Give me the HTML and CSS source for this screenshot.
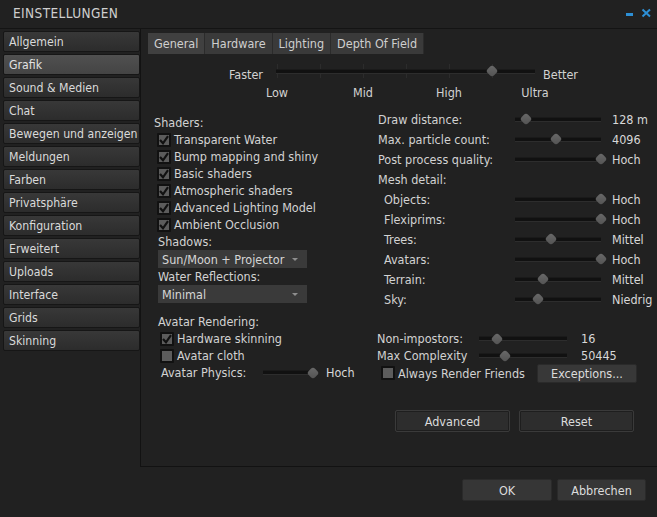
FILE: index.html
```html
<!DOCTYPE html>
<html lang="de">
<head>
  <meta charset="UTF-8">
  <title>Einstellungen</title>
  <link rel="stylesheet" href="styles.css">
</head>
<body>
  <div class="window">
    <header class="titlebar">
      <span class="title">EINSTELLUNGEN</span>
      <svg class="controls" width="30" height="12" viewBox="0 0 30 12">
        <rect x="3" y="6" width="7" height="3" fill="#2d8fd5"/>
        <path d="M19.5 2.5 L27 9.5 M27 2.5 L19.5 9.5" stroke="#2d8fd5" stroke-width="2"/>
      </svg>
    </header>

    <div class="main">
      <nav class="sidebar">
        <div class="nav-item">Allgemein</div>
        <div class="nav-item active">Grafik</div>
        <div class="nav-item">Sound &amp; Medien</div>
        <div class="nav-item">Chat</div>
        <div class="nav-item">Bewegen und anzeigen</div>
        <div class="nav-item">Meldungen</div>
        <div class="nav-item">Farben</div>
        <div class="nav-item">Privatsphäre</div>
        <div class="nav-item">Konfiguration</div>
        <div class="nav-item">Erweitert</div>
        <div class="nav-item">Uploads</div>
        <div class="nav-item">Interface</div>
        <div class="nav-item">Grids</div>
        <div class="nav-item">Skinning</div>
      </nav>

      <section class="panel">
        <div class="tabs">
          <div class="tab active">General</div>
          <div class="tab">Hardware</div>
          <div class="tab">Lighting</div>
          <div class="tab">Depth Of Field</div>
        </div>

        <div class="quality-row">
          <span class="q-end">Faster</span>
          <div class="q-slider slider">
            <div class="track"></div>
            <div class="knob" style="left: 216px"></div>
          </div>
          <span>Better</span>
        </div>
        <div class="q-marks">
          <span>Low</span><span>Mid</span><span>High</span><span>Ultra</span>
        </div>

        <div class="settings">
          <div class="col-left">
            <div class="label">Shaders:</div>
            <div class="check-row"><span class="checkbox on"></span>Transparent Water</div>
            <div class="check-row"><span class="checkbox on"></span>Bump mapping and shiny</div>
            <div class="check-row"><span class="checkbox on"></span>Basic shaders</div>
            <div class="check-row"><span class="checkbox on"></span>Atmospheric shaders</div>
            <div class="check-row"><span class="checkbox on"></span>Advanced Lighting Model</div>
            <div class="check-row"><span class="checkbox on"></span>Ambient Occlusion</div>
            <div class="label indent">Shadows:</div>
            <div class="select"><span>Sun/Moon + Projector</span><span class="arrow"></span></div>
            <div class="label indent">Water Reflections:</div>
            <div class="select"><span>Minimal</span><span class="arrow"></span></div>
          </div>

          <div class="col-right">
            <div class="srow"><span>Draw distance:</span><div class="slider"><div class="track"></div><div class="knob" style="left: 11px"></div></div><span class="value">128 m</span></div>
            <div class="srow"><span>Max. particle count:</span><div class="slider"><div class="track"></div><div class="knob" style="left: 41px"></div></div><span class="value">4096</span></div>
            <div class="srow"><span>Post process quality:</span><div class="slider"><div class="track"></div><div class="knob" style="left: 86px"></div></div><span class="value">Hoch</span></div>
            <div class="srow"><span>Mesh detail:</span></div>
            <div class="srow sub"><span>Objects:</span><div class="slider"><div class="track"></div><div class="knob" style="left: 86px"></div></div><span class="value">Hoch</span></div>
            <div class="srow sub"><span>Flexiprims:</span><div class="slider"><div class="track"></div><div class="knob" style="left: 86px"></div></div><span class="value">Hoch</span></div>
            <div class="srow sub"><span>Trees:</span><div class="slider"><div class="track"></div><div class="knob" style="left: 36px"></div></div><span class="value">Mittel</span></div>
            <div class="srow sub"><span>Avatars:</span><div class="slider"><div class="track"></div><div class="knob" style="left: 86px"></div></div><span class="value">Hoch</span></div>
            <div class="srow sub"><span>Terrain:</span><div class="slider"><div class="track"></div><div class="knob" style="left: 28px"></div></div><span class="value">Mittel</span></div>
            <div class="srow sub"><span>Sky:</span><div class="slider"><div class="track"></div><div class="knob" style="left: 23px"></div></div><span class="value">Niedrig</span></div>
          </div>
        </div>

        <div class="avatar">
          <div class="cell-left">Avatar Rendering:</div>
          <div></div>

          <div class="cell-left check"><span class="checkbox on"></span>Hardware skinning</div>
          <div class="cell-right">
            <span class="a-label">Non-impostors:</span>
            <div class="slider wide"><div class="track"></div><div class="knob" style="left: 18px"></div></div>
            <span class="value">16</span>
          </div>

          <div class="cell-left check"><span class="checkbox"></span>Avatar cloth</div>
          <div class="cell-right">
            <span class="a-label">Max Complexity</span>
            <div class="slider wide"><div class="track"></div><div class="knob" style="left: 26px"></div></div>
            <span class="value">50445</span>
          </div>

          <div class="cell-left physics">
            <span class="p-label">Avatar Physics:</span>
            <div class="slider short"><div class="track"></div><div class="knob" style="left: 50px"></div></div>
            <span class="value">Hoch</span>
          </div>
          <div class="cell-right friends">
            <span class="checkbox"></span>Always Render Friends
            <button class="btn exceptions">Exceptions...</button>
          </div>
        </div>

        <div class="actions">
          <button class="btn flat">Advanced</button>
          <button class="btn flat">Reset</button>
        </div>
      </section>
    </div>

    <footer class="footer">
      <button class="btn ok">OK</button>
      <button class="btn cancel">Abbrechen</button>
    </footer>
  </div>
</body>
</html>
```

FILE: styles.css
```css
body {
  margin: 0;
  background-color: #212121;
  font-family: "DejaVu Sans Condensed", "DejaVu Sans", sans-serif;
  font-size: 12.5px;
  color: #d2d2d2;
}

.window {
  width: 657px;
  height: 517px;
  overflow: hidden;
  background-color: #212121;
}

/* title bar */
.titlebar {
  display: flex;
  align-items: center;
  justify-content: space-between;
  height: 29px;
  padding: 0 4px 2px 13px;
  box-sizing: border-box;
  border-bottom: 1px solid #141414;
}

.title {
  font-size: 13.5px;
  letter-spacing: 0.4px;
  color: #cfcfcf;
}

/* main */
.main {
  display: flex;
  height: 438px;
}

.sidebar {
  width: 140px;
  flex-shrink: 0;
  padding: 2px 0 0 3px;
  box-sizing: border-box;
}

.nav-item {
  width: 137px;
  height: 21px;
  margin-bottom: 2px;
  padding-left: 5px;
  box-sizing: border-box;
  font-size: 12.2px;
  line-height: 20px;
  white-space: nowrap;
  overflow: hidden;
  border: 1px solid #161616;
  border-radius: 2px;
  background: linear-gradient(#383838, #2c2c2c);
  color: #dadada;
}

.nav-item.active {
  background: linear-gradient(#505050, #444444);
  color: #e2e2e2;
}

.panel {
  flex: 1;
  padding: 4px 0 0 7px;
  border-left: 1px solid #121212;
  border-bottom: 1px solid #121212;
}

.tabs {
  display: flex;
  height: 21px;
}

.tab {
  padding: 0 6px;
  line-height: 21px;
  background-color: #3a3a3a;
  border-right: 1px solid #2b2b2b;
  color: #cfcfcf;
}

.tab.active {
  background-color: #404040;
}

/* sliders */
.slider {
  position: relative;
  width: 86px;
  height: 12px;
  display: flex;
  align-items: center;
}

.track {
  width: 100%;
  height: 3px;
  background-color: #111111;
  border-top: 1px solid #1a1a1a;
  border-bottom: 1px solid #2d2d2d;
}

.knob {
  position: absolute;
  top: 50%;
  width: 9px;
  height: 9px;
  border-radius: 3px;
  background: linear-gradient(135deg, #6a6a6a, #525252);
  transform: translate(-50%, -50%) rotate(45deg);
}

/* quality */
.quality-row {
  display: flex;
  height: 16px;
  line-height: 16px;
  margin-top: 13px;
}

.q-end {
  width: 45px;
  margin-left: 70px;
  text-align: right;
}

.q-slider {
  width: 259px;
  height: 8px;
  margin: 0 8px 0 13px;
}

.q-slider::before {
  content: "";
  position: absolute;
  left: 1px;
  right: 0;
  top: -3px;
  height: 14px;
  background: repeating-linear-gradient(to right, #2c2c2c 0 1px, transparent 1px 43px);
}

.q-slider .track {
  position: relative;
}

.q-marks {
  display: grid;
  grid-template-columns: repeat(4, 86px);
  margin: 2px 0 0 86px;
  height: 16px;
  line-height: 16px;
  text-align: center;
}

/* settings */
.settings {
  display: grid;
  grid-template-columns: 224px 1fr;
  margin: 8px 0 0 6px;
}

.col-left {
  padding-top: 5px;
}

.label {
  line-height: 17px;
}

.label.indent {
  padding-left: 4px;
}

.check-row {
  display: flex;
  align-items: center;
  gap: 3px;
  height: 17px;
  padding-left: 3px;
}

.checkbox {
  width: 14px;
  height: 14px;
  box-sizing: border-box;
  flex-shrink: 0;
  border: 2px solid #111111;
  border-radius: 1px;
  background-color: #5c5c5c;
}

.checkbox.on {
  background: #5c5c5c url("data:image/svg+xml,%3Csvg xmlns='http://www.w3.org/2000/svg' width='10' height='10'%3E%3Cpath d='M1 5 L4 8.3 L9 1.2' fill='none' stroke='%23111' stroke-width='2.2'/%3E%3C/svg%3E") center no-repeat;
}

.select {
  width: 149px;
  height: 18px;
  margin-left: 4px;
  padding: 0 9px 0 4px;
  box-sizing: border-box;
  display: flex;
  align-items: center;
  justify-content: space-between;
  background-color: #3a3a3a;
  color: #d6d6d6;
}

.arrow {
  width: 0;
  height: 0;
  border-left: 3.5px solid transparent;
  border-right: 3.5px solid transparent;
  border-top: 3px solid #8e8e8e;
}

.srow {
  display: grid;
  grid-template-columns: 137px 97px auto;
  align-items: center;
  height: 20px;
}

.srow.sub > span:first-child {
  padding-left: 6px;
}

.value {
  color: #d8d8d8;
}

/* avatar section */
.avatar {
  display: grid;
  grid-template-columns: 228px 1fr;
  grid-auto-rows: 17px;
  margin-top: 4px;
}

.cell-left {
  display: flex;
  align-items: center;
  padding-left: 10px;
}

.cell-left.check {
  padding-left: 12px;
  gap: 3px;
}

.cell-left.physics {
  padding-left: 13px;
}

.p-label {
  width: 102px;
}

.slider.short {
  width: 50px;
  margin-right: 13px;
}

.cell-right {
  display: flex;
  align-items: center;
  padding-left: 1px;
}

.a-label {
  width: 102px;
}

.slider.wide {
  width: 88px;
  margin-right: 14px;
}

.cell-right.friends {
  padding-left: 5px;
  gap: 3px;
  align-items: flex-start;
  padding-top: 2px;
}

.btn {
  font: inherit;
  color: #dcdcdc;
  border: 1px solid #1c1c1c;
  border-radius: 2px;
  background: linear-gradient(#3b3b3b, #333333);
  padding: 0;
}

.exceptions {
  width: 100px;
  height: 19px;
  margin: -2px 20px 0 auto;
  background: #383838;
  border-color: #2a2a2a;
}

.actions {
  display: flex;
  gap: 9px;
  margin: 29px 0 0 247px;
}

.btn.flat {
  width: 115px;
  height: 22px;
  background: #2d2d2d;
  border: 1px solid #3a3a3a;
  box-shadow: inset 0 0 0 1px #1e1e1e;
}

.footer {
  display: flex;
  justify-content: flex-end;
  gap: 5px;
  padding: 12px 11px 0 0;
}

.ok,
.cancel {
  width: 90px;
  height: 22px;
  background: #363636;
  border-color: #2a2a2a;
}

.cancel {
  width: 89px;
}
```
